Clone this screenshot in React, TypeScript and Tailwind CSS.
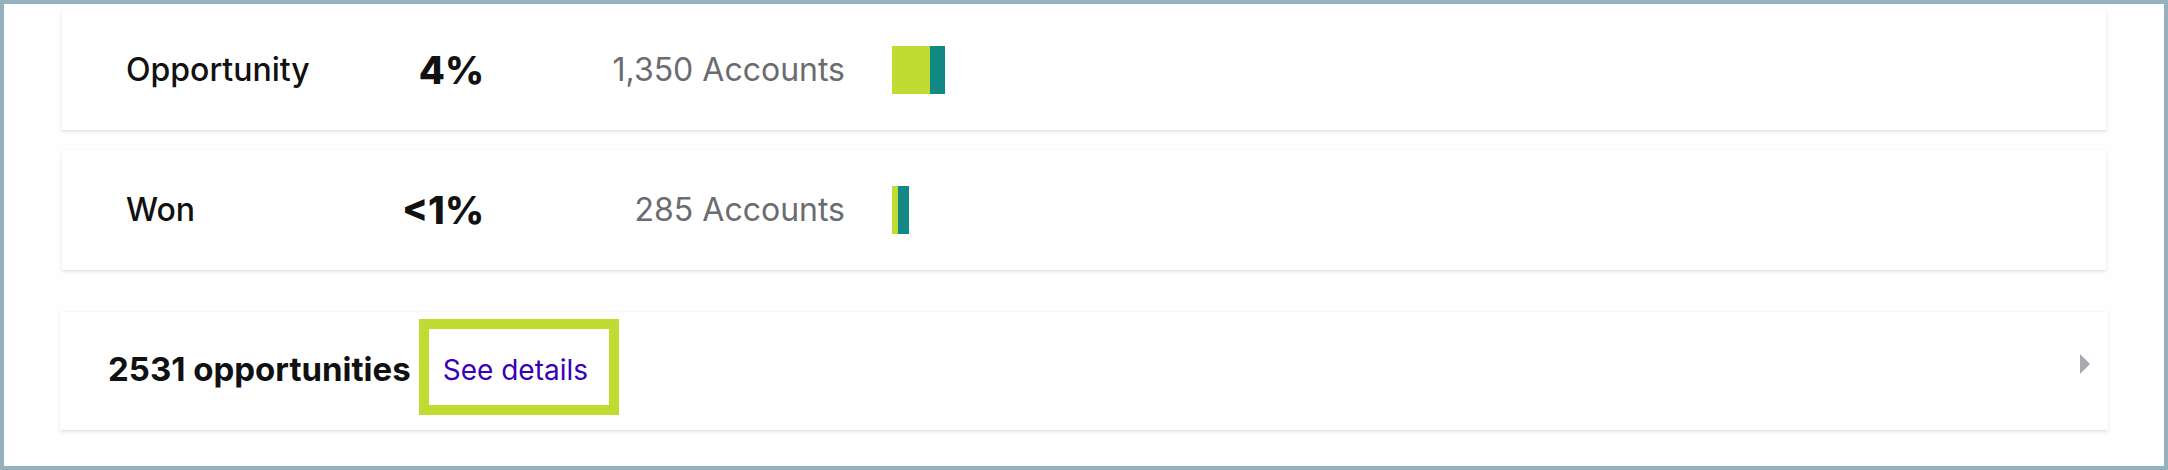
import React from "react";

type FunnelRow = {
  label: string;
  share: string;
  accounts: string;
  won: number;
  open: number;
};

const rows: FunnelRow[] = [
  { label: "Opportunity", share: "4%", accounts: "1,350 Accounts", won: 38, open: 15 },
  { label: "Won", share: "<1%", accounts: "285 Accounts", won: 6, open: 11 },
];

const StageCard: React.FC<{ row: FunnelRow; first?: boolean }> = ({ row, first }) => {
  return (
    <div
      className={`${first ? "mt-[6px]" : "mt-[20px]"} mx-[58px] h-[120px] shrink-0 bg-white shadow-[0_2px_3px_rgba(0,0,0,0.09),0_0_2px_rgba(0,0,0,0.05)] flex items-center pl-[64px]`}
    >
      <div className="w-[200px] text-[32px] font-medium text-[#111111] leading-none">{row.label}</div>
      <div className="w-[158px] text-right text-[38px] font-extrabold text-[#111111] leading-none">{row.share}</div>
      <div className="w-[361px] text-right text-[32px] text-[#6b6b70] leading-none">{row.accounts}</div>
      {/* stacked bar: won share + open share */}
      <div className="ml-[47px] flex h-[48px]">
        <div className="h-full bg-[#c0dc32]" style={{ width: row.won }} />
        <div className="h-full bg-[#138985]" style={{ width: row.open }} />
      </div>
    </div>
  );
};

const App: React.FC = () => {
  return (
    <div
      className="w-[2168px] h-[470px] box-border border-4 border-[#94b1be] bg-[#fefefe] flex flex-col"
      style={{ fontFamily: "Inter, 'Liberation Sans', sans-serif" }}
    >
      {rows.map((row, i) => (
        <StageCard key={row.label} row={row} first={i === 0} />
      ))}

      {/* Summary */}
      <div className="mt-[42px] mx-[56px] h-[118px] shrink-0 pb-[8px] bg-white shadow-[0_2px_3px_rgba(0,0,0,0.09),0_0_2px_rgba(0,0,0,0.05)] flex items-center pl-[48px] pr-[18px]">
        <span className="pt-[5px] text-[33px] font-bold text-[#111111] leading-none">2531 opportunities</span>
        <button className="ml-[8px] w-[200px] h-[96px] shrink-0 box-border border-[10px] border-[#c0dc32] bg-white flex items-center pl-[14px] pt-[5px]">
          <span className="text-[28px] text-[#3a00b7] leading-none">See details</span>
        </button>
        <svg className="ml-auto mb-[6px]" width="10" height="20" viewBox="0 0 10 20">
          <path d="M0 0 L10 10 L0 20 Z" fill="#a9a9b0" />
        </svg>
      </div>
    </div>
  );
};

export default App;
